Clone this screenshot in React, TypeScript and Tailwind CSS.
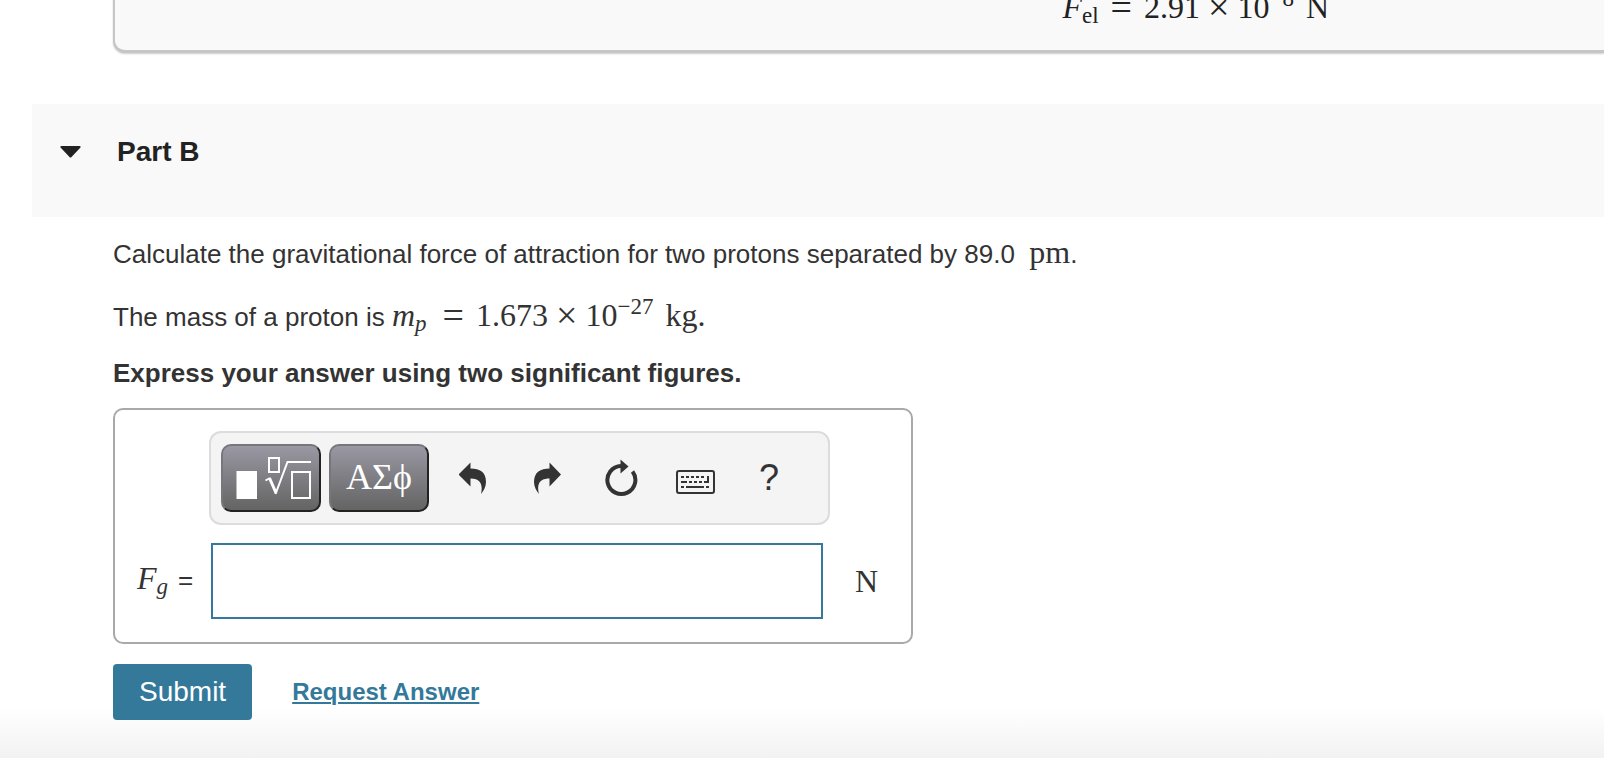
import { useState, type ReactNode } from "react";

type ToolButtonProps = {
  label: string;
  children: ReactNode;
  onClick?: () => void;
};

const SERIF = "font-['Liberation_Serif',serif] text-[32px]";

function Sup({ children }: { children: ReactNode }) {
  return (
    <sup className="static align-[12px] text-[23px] leading-none">{children}</sup>
  );
}

function Sub({ children }: { children: ReactNode }) {
  return (
    <sub className="static align-[-5px] text-[23px] leading-none">{children}</sub>
  );
}

function Equals() {
  return (
    <span className="px-3 align-[-2px] text-[38px] leading-none">=</span>
  );
}

function Times() {
  return (
    <span className="px-2 align-[-2px] text-[38px] leading-none">×</span>
  );
}

function ToolButton({ label, children, onClick }: ToolButtonProps) {
  return (
    <button
      type="button"
      aria-label={label}
      onClick={onClick}
      className="flex h-17 w-[74px] items-center justify-center text-[#333]"
    >
      {children}
    </button>
  );
}

function PaletteButton({ label, children }: ToolButtonProps) {
  return (
    <button
      type="button"
      aria-label={label}
      className="flex h-17 w-25 items-center justify-center rounded-[10px] border-2 border-t-[#77767a] border-r-[#222] border-b-[#222] border-l-[#77767a] bg-linear-to-b from-[#9a98a3] to-[#646464] text-white"
    >
      {children}
    </button>
  );
}

function TemplatesIcon() {
  return (
    <svg width="82" height="44" viewBox="-6 0 82 44" fill="none" aria-hidden>
      <rect x="0.500" y="15" width="20.500" height="28" fill="#fff" />
      <rect x="33" y="2" width="10" height="14" stroke="#fff" strokeWidth="2" />
      <path d="M29.500 24.500L34 22" stroke="#fff" strokeWidth="2" />
      <path d="M33.500 22L40 37" stroke="#fff" strokeWidth="3" />
      <path d="M39.500 38L51.500 6H75" stroke="#fff" strokeWidth="2" />
      <rect x="56" y="16" width="18" height="26" stroke="#fff" strokeWidth="2" />
    </svg>
  );
}

function UndoIcon() {
  return (
    <svg width="28" height="33" viewBox="1 0 28 33" aria-hidden>
      <path
        d="M0.500 12.500L12.500 0.500V6.500C22 6.500 28 10 28 20C28 25 25.500 29 23 32C24.500 25 24.500 16.500 12.500 16.500V24.500Z"
        fill="currentColor"
      />
    </svg>
  );
}

function RedoIcon() {
  return (
    <svg width="28" height="33" viewBox="-1 0 28 33" aria-hidden>
      <path
        d="M27 12.500L15.500 0.500V6.500C6.500 6.500 0 10 0 20C0 25 2.500 29 5 32C3.500 25 3 16.500 15.500 16.500V24.500Z"
        fill="currentColor"
      />
    </svg>
  );
}

function ResetIcon() {
  return (
    <svg width="34" height="38" viewBox="0 0 34 38" fill="none" aria-hidden>
      <path
        d="M28.500 12.500A14 14 0 1 1 17 7"
        stroke="currentColor"
        strokeWidth="4"
      />
      <path d="M16.500 0.500L24.500 7.500L16.500 14.500Z" fill="currentColor" />
    </svg>
  );
}

function KeyboardIcon() {
  return (
    <svg width="40" height="24" viewBox="0 0 40 24" fill="none" aria-hidden>
      <rect x="2" y="1" width="37" height="22" rx="2" stroke="currentColor" strokeWidth="2" />
      <g fill="currentColor">
        <path d="M6 6h3v2H6zM11 6h3v2h-3zM16 6h3v2h-3zM21 6h3v2h-3zM26 6h3v2h-3z" />
        <path d="M6 11h6v2H6zM14 11h3v2h-3zM19 11h3v2h-3zM24 11h3v2h-3z" />
        <path d="M32 6h2v7h-5v-2h3z" />
        <path d="M6 16h3v2H6zM11 16h18v2H11zM31 16h3v2h-3z" />
      </g>
    </svg>
  );
}

function AnswerBox() {
  const [value, setValue] = useState("");

  return (
    <div className="mt-[15px] w-fit rounded-[10px] border-2 border-[#a9a9a9] pt-[21px] pr-[33px] pb-[23px] pl-5">
      <div className="ml-[74px] flex w-fit items-center rounded-xl border-2 border-[#dcdcdc] bg-[#f4f4f4] py-[11px] pr-[22px] pl-[10px]">
        <div className="flex gap-2">
          <PaletteButton label="Templates">
            <TemplatesIcon />
          </PaletteButton>
          <PaletteButton label="Symbols">
            <span className="pb-0.5 font-['Liberation_Serif',serif] text-4xl leading-none">
              ΑΣϕ
            </span>
          </PaletteButton>
        </div>
        <div className="ml-[7px] flex">
          <ToolButton label="Undo">
            <UndoIcon />
          </ToolButton>
          <ToolButton label="Redo">
            <RedoIcon />
          </ToolButton>
          <ToolButton label="Reset" onClick={() => setValue("")}>
            <ResetIcon />
          </ToolButton>
          <ToolButton label="Keyboard shortcuts">
            <span className="pt-2">
              <KeyboardIcon />
            </span>
          </ToolButton>
          <ToolButton label="Help">
            <span className="text-4xl leading-none">?</span>
          </ToolButton>
        </div>
      </div>

      <div className="mt-[18px] flex items-center">
        <label
          htmlFor="answer"
          className="flex w-19 items-baseline gap-[10px] pb-1 pl-0.5 text-[26px] whitespace-nowrap"
        >
          <span className={`${SERIF} italic`}>
            F<Sub>g</Sub>
          </span>
          <span>=</span>
        </label>
        <input
          id="answer"
          type="text"
          value={value}
          onChange={(e) => setValue(e.target.value)}
          autoComplete="off"
          className="h-19 w-[612px] border-2 border-[#357a9c] bg-white px-3 text-[26px] outline-none"
        />
        <span className={`${SERIF} ml-8`}>N</span>
      </div>
    </div>
  );
}

export default function App() {
  const [open, setOpen] = useState(true);

  return (
    <main className="min-h-screen overflow-hidden bg-linear-to-t from-[#f2f2f2] to-white to-[50px] font-['Liberation_Sans',Arial,sans-serif] text-[26px] leading-10 text-[#333]">
      <div className="-mt-[41px] ml-[113px] flex justify-end rounded-bl-xl border-b-3 border-l-2 border-[#c6c6c6] bg-[#f9f9f9] pt-7 pr-[275px] pb-[23px] text-[#222] shadow-[0_1px_2px_rgba(0,0,0,0.2)]">
        <p className={SERIF}>
          <i>F</i>
          <Sub>el</Sub>
          <Equals />
          2.91
          <Times />
          10
          <Sup>−8</Sup>
          <span className="ml-1"> N</span>
        </p>
      </div>

      <section>
        <header className="mt-[51px] ml-8 flex h-[113px] items-start bg-[#f9f9f9] pt-7 pl-7 text-[#222]">
          <button
            type="button"
            aria-expanded={open}
            onClick={() => setOpen(!open)}
            className="flex items-center gap-9 text-[28px] font-bold"
          >
            <svg width="21" height="12" viewBox="0 0 21 12" aria-hidden>
              <path
                d="M1.500 0H19.500Q21.500 0.500 20 2L11.500 11Q10.500 12 9.500 11L1 2Q-0.500 0.500 1.500 0Z"
                fill="currentColor"
              />
            </svg>
            Part B
          </button>
        </header>

        {open && (
          <div className="px-[113px] pt-[15px]">
            <p>
              Calculate the gravitational force of attraction for two protons
              separated by 89.0&nbsp;{" "}
              <span className={SERIF}>pm</span>.
            </p>
            <p className="mt-[21px]">
              The mass of a proton is{" "}
              <span className={SERIF}>
                <i>m</i>
                <Sub>
                  <i className="mr-1">p</i>
                </Sub>
                <Equals />
                1.673
                <Times />
                10<Sup>−27</Sup>
                <span className="ml-1"> kg.</span>
              </span>
            </p>
            <p className="mt-4 font-bold">
              Express your answer using two significant figures.
            </p>

            <AnswerBox />

            <div className="mt-5 flex items-center gap-10">
              <button
                type="button"
                className="h-14 rounded bg-[#34799a] px-[26px] text-[28px] text-white"
              >
                Submit
              </button>
              <a
                href="#answer"
                className="text-2xl font-bold text-[#34799a] underline decoration-2 underline-offset-2"
              >
                Request Answer
              </a>
            </div>
          </div>
        )}
      </section>
    </main>
  );
}
